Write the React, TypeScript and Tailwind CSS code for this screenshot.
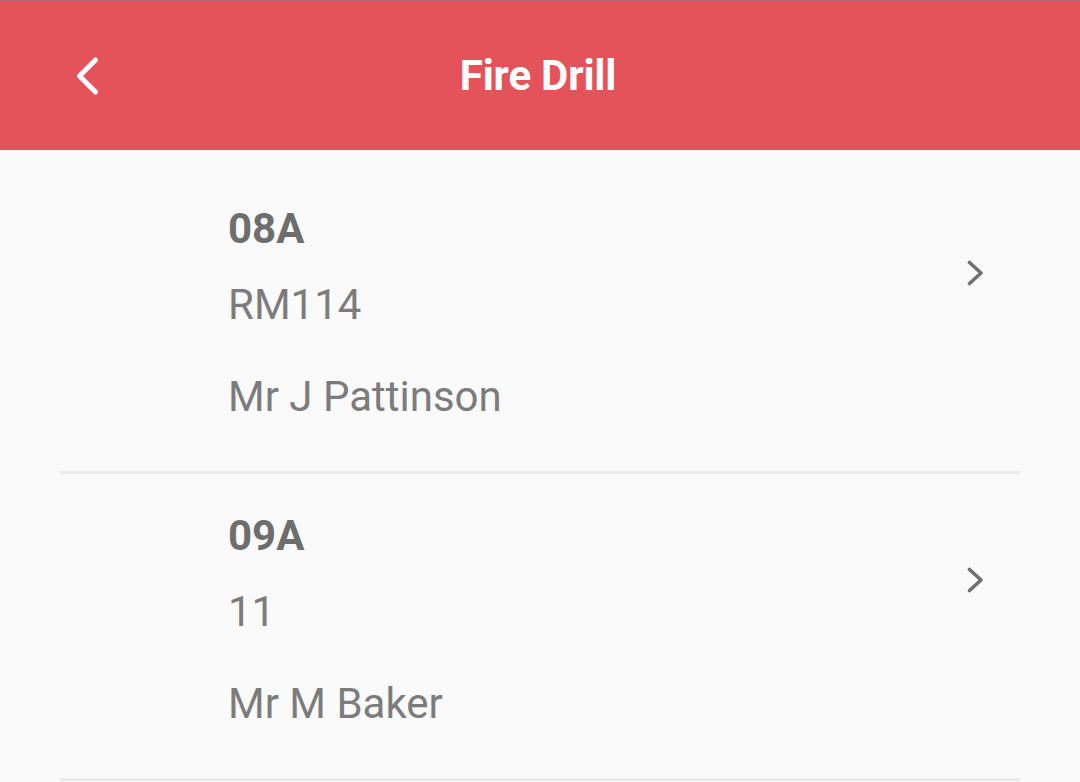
import React from "react";

const rows = [
  { code: "08A", room: "RM114", teacher: "Mr J Pattinson" },
  { code: "09A", room: "11", teacher: "Mr M Baker" },
];

export default function App() {
  return (
    <div
      className="w-[1080px] h-[782px] overflow-hidden bg-[#fafafa]"
      style={{ fontFamily: "Roboto, 'Noto Sans', sans-serif" }}
    >
      <header className="h-[150px] bg-[#e5535a] border-t border-[#b8627c] grid grid-cols-[1fr_auto_1fr] items-center">
        <div className="pl-[73px] flex items-center">
          <svg width="28" height="44" viewBox="0 0 28 44" fill="none">
            <path
              d="M22.5 6 L6.5 22 L22.5 38"
              stroke="#ffffff"
              strokeWidth="5"
              strokeLinecap="round"
              strokeLinejoin="round"
            />
          </svg>
        </div>
        <h1 className="mr-[4px] text-white font-bold text-[42px] leading-[48px] tracking-[-0.2px]">
          Fire Drill
        </h1>
        <div />
      </header>

      <div className="mx-[60px] pt-[17px]">
        {rows.map((r) => (
          <div key={r.code}>
            <div className="flex">
              <div className="pl-[168px] pt-[38px] pb-[50px] flex flex-col">
                <div className="text-[42px] leading-[48px] font-bold text-[#6e6e6e]">
                  {r.code}
                </div>
                <div className="mt-[28px] text-[42px] leading-[48px] text-[#7c7c7c]">
                  {r.room}
                </div>
                <div className="mt-[44px] text-[42px] leading-[48px] text-[#7c7c7c]">
                  {r.teacher}
                </div>
              </div>
              <div className="ml-auto mr-[36px] pt-[93px]">
                <svg width="17" height="26" viewBox="0 0 17 26" fill="none">
                  <path
                    d="M2.5 2.5 L14 13 L2.5 23.5"
                    stroke="#707070"
                    strokeWidth="3.6"
                    strokeLinecap="round"
                    strokeLinejoin="round"
                  />
                </svg>
              </div>
            </div>
            <div className="h-[3px] bg-[#ebebeb]" />
          </div>
        ))}
      </div>
    </div>
  );
}
